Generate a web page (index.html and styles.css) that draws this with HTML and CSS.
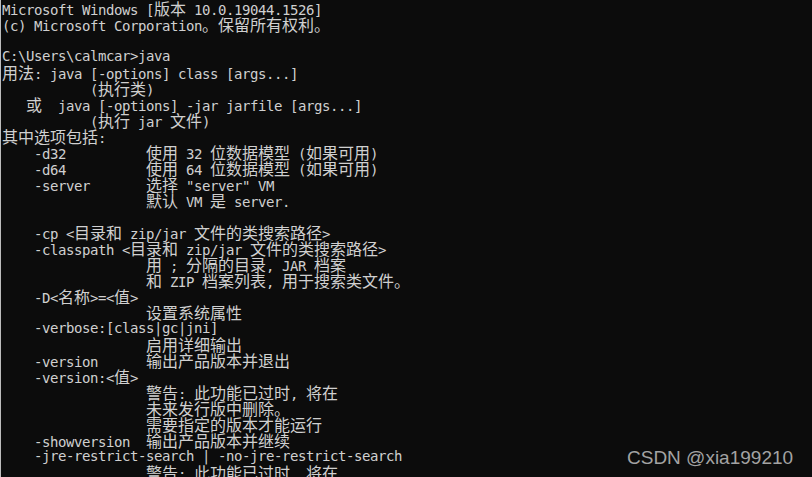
FILE: index.html
```html
<!DOCTYPE html>
<html lang="zh-CN">
<head>
<meta charset="utf-8">
<title>命令提示符 - java</title>
<link rel="stylesheet" href="styles.css">
</head>
<body>
<div class="console">
  <div class="term">
    <div class="l">Microsoft Windows [<span class="w">版本</span> 10.0.19044.1526]</div>
    <div class="l">(c) Microsoft Corporation<span class="w">。保留所有权利。</span></div>
    <div class="l"> </div>
    <div class="l">C:\Users\calmcar&gt;java</div>
    <div class="l"><span class="w">用法</span>: java [-options] class [args...]</div>
    <div class="l">           (<span class="w">执行类</span>)</div>
    <div class="l">   <span class="w">或</span>  java [-options] -jar jarfile [args...]</div>
    <div class="l">           (<span class="w">执行</span> jar <span class="w">文件</span>)</div>
    <div class="l"><span class="w">其中选项包括</span>:</div>
    <div class="l">    -d32          <span class="w">使用</span> 32 <span class="w">位数据模型</span> (<span class="w">如果可用</span>)</div>
    <div class="l">    -d64          <span class="w">使用</span> 64 <span class="w">位数据模型</span> (<span class="w">如果可用</span>)</div>
    <div class="l">    -server       <span class="w">选择</span> "server" VM</div>
    <div class="l">                  <span class="w">默认</span> VM <span class="w">是</span> server.</div>
    <div class="l"> </div>
    <div class="l">    -cp &lt;<span class="w">目录和</span> zip/jar <span class="w">文件的类搜索路径</span>&gt;</div>
    <div class="l">    -classpath &lt;<span class="w">目录和</span> zip/jar <span class="w">文件的类搜索路径</span>&gt;</div>
    <div class="l">                  <span class="w">用</span> ; <span class="w">分隔的目录</span>, JAR <span class="w">档案</span></div>
    <div class="l">                  <span class="w">和</span> ZIP <span class="w">档案列表</span>, <span class="w">用于搜索类文件。</span></div>
    <div class="l">    -D&lt;<span class="w">名称</span>&gt;=&lt;<span class="w">值</span>&gt;</div>
    <div class="l">                  <span class="w">设置系统属性</span></div>
    <div class="l">    -verbose:[class|gc|jni]</div>
    <div class="l">                  <span class="w">启用详细输出</span></div>
    <div class="l">    -version      <span class="w">输出产品版本并退出</span></div>
    <div class="l">    -version:&lt;<span class="w">值</span>&gt;</div>
    <div class="l">                  <span class="w">警告</span>: <span class="w">此功能已过时</span>, <span class="w">将在</span></div>
    <div class="l">                  <span class="w">未来发行版中删除。</span></div>
    <div class="l">                  <span class="w">需要指定的版本才能运行</span></div>
    <div class="l">    -showversion  <span class="w">输出产品版本并继续</span></div>
    <div class="l">    -jre-restrict-search | -no-jre-restrict-search</div>
    <div class="l">                  <span class="w">警告</span>: <span class="w">此功能已过时</span>, <span class="w">将在</span></div>
  </div>
  <div class="mark">CSDN @xia199210</div>
</div>
</body>
</html>
```

FILE: styles.css
```css
html, body {
  margin: 0;
  padding: 0;
  background: #0c0c0c;
}

.console {
  position: relative;
  width: 812px;
  height: 477px;
  overflow: hidden;
  background: #0c0c0c;
  border-left: 1px solid #bdbdbd;
  box-sizing: border-box;
}

.term {
  display: flex;
  flex-direction: column;
  padding-left: 1px;
  color: #d0d0d0;
  font-family: "DejaVu Sans Mono", "Liberation Mono", monospace;
  font-size: 14px;
  letter-spacing: -0.428px;
}

.l {
  height: 16px;
  line-height: 16px;
  white-space: pre;
  overflow: visible;
}

.w {
  font-family: "Noto Sans CJK SC", "Noto Sans CJK JP", sans-serif;
  font-size: 16px;
  letter-spacing: 0;
  line-height: 16px;
}

.mark {
  position: absolute;
  left: 626px;
  top: 446px;
  color: #a3a3a3;
  font-family: "Liberation Sans", Arial, sans-serif;
  font-size: 19px;
  line-height: 24px;
  white-space: nowrap;
}
```
